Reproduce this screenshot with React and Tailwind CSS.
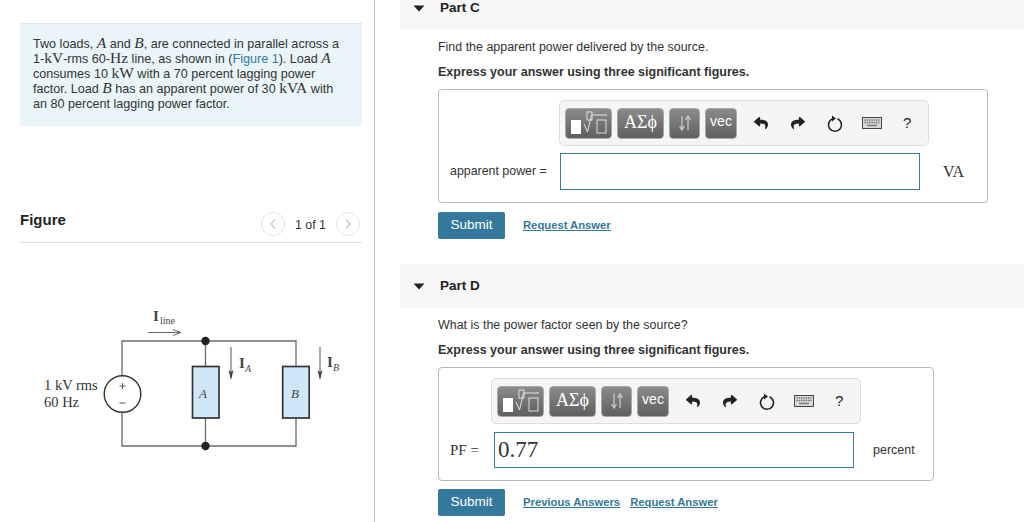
import React from "react";
import { FaReply, FaShare } from "react-icons/fa";

const sans = "font-['Liberation_Sans',Arial,sans-serif]";
const serif = "font-['Liberation_Serif','Times_New_Roman',serif]";

function M({ children, it }) {
  return <span className={`${serif} text-[15.500px] leading-none ${it ? "italic" : ""}`}>{children}</span>;
}

function Line({ children, className = "" }) {
  return <div className={`whitespace-nowrap h-[15px] ${className}`}>{children}</div>;
}

function Pager() {
  const Circle = ({ d }) => (
    <span className="w-[24px] h-[24px] rounded-full border border-[#e3e3e3] flex items-center justify-center">
      <svg width="8" height="12" viewBox="0 0 8 12" fill="none" stroke="#b5b5b5" strokeWidth="1.1">
        <path d={d} />
      </svg>
    </span>
  );
  return (
    <div className="flex items-center gap-[10px] text-[12.4px] text-[#333] mr-[2px] mt-[5px]">
      <Circle d="M6 1.5 L2 6 L6 10.5" />
      <span className="mt-[2px]">1 of 1</span>
      <Circle d="M2 1.5 L6 6 L2 10.5" />
    </div>
  );
}

function Circuit() {
  const w = "#6b6b6b";
  return (
    <svg width="330" height="160" viewBox="40 300 330 160" className="block" fill="none">
      <path d="M122 375.5V341H296V366M296 418V446H122V412.5" stroke={w} strokeWidth="1.3" />
      <path d="M205.5 341V366M205.5 418V446" stroke={w} strokeWidth="1.3" />
      <circle cx="122.5" cy="394" r="18.3" stroke="#333" strokeWidth="1.4" fill="#fff" />
      <path d="M119.5 386h6M122.5 383v6M119.5 403h6" stroke="#555" strokeWidth="1" />
      <rect x="192.5" y="366.5" width="26.5" height="51.5" fill="#cfe7f7" stroke="#333" strokeWidth="1.7" />
      <rect x="282.7" y="366.5" width="26.5" height="51.5" fill="#cfe7f7" stroke="#333" strokeWidth="1.7" />
      <circle cx="205.5" cy="341" r="4.2" fill="#222" />
      <circle cx="205.5" cy="446" r="4.2" fill="#222" />
      <path d="M148 332.5H180M173 329.5L181 332.5L173 335.5" stroke="#555" strokeWidth="0.9" />
      <path d="M231 347V378" stroke="#555" strokeWidth="1" />
      <path d="M228.500 370L231 380L233.500 370L231 372Z" fill="#444" />
      <path d="M320 347V378" stroke="#555" strokeWidth="1" />
      <path d="M317.500 370L320 380L322.500 370L320 372Z" fill="#444" />
      <g fontFamily="'Liberation Serif',serif" fill="#444">
        <text x="153" y="321" fontSize="15" fontWeight="700">I</text>
        <text x="160" y="324" fontSize="10">line</text>
        <text x="239" y="368" fontSize="15" fontWeight="700">I</text>
        <text x="245" y="372" fontSize="10" fontStyle="italic">A</text>
        <text x="327" y="367" fontSize="15" fontWeight="700">I</text>
        <text x="333" y="371" fontSize="10" fontStyle="italic">B</text>
        <text x="199" y="398" fontSize="13" fontStyle="italic">A</text>
        <text x="291" y="398" fontSize="13" fontStyle="italic">B</text>
        <text x="44" y="390" fontSize="14.5" fill="#333">1 kV rms</text>
        <text x="44" y="407" fontSize="14.5" fill="#333">60 Hz</text>
      </g>
    </svg>
  );
}

function ToolBtn({ className = "", children }) {
  return (
    <div className={`h-[31px] rounded-[4px] bg-gradient-to-b from-[#8b8b8b] to-[#5f5f5f] border border-[#a8a8a8] text-white flex items-center justify-center ${className}`}>
      {children}
    </div>
  );
}

function Toolbar() {
  return (
    <div className="w-[370px] h-[46px] rounded-[5px] border border-[#dcdcdc] bg-[#f5f5f5] flex items-center pl-[5px]">
      <ToolBtn className="w-[47px]">
        <svg width="38" height="24" viewBox="0 0 38 24" fill="none">
          <rect x="1" y="9" width="10" height="14" fill="#fff" />
          <rect x="17" y="1" width="5" height="8" stroke="#e8e8e8" strokeWidth="0.9" />
          <path d="M14 13L17.500 21L21.500 4H37" stroke="#eee" strokeWidth="0.9" />
          <rect x="27" y="9" width="9" height="13" stroke="#e8e8e8" strokeWidth="0.9" />
        </svg>
      </ToolBtn>
      <ToolBtn className={`w-[47px] ml-[5px] ${serif} text-[18px] pb-[1px]`}>ΑΣϕ</ToolBtn>
      <ToolBtn className="w-[31px] ml-[5px]">
        <svg width="14" height="16" viewBox="0 0 14 16" fill="none" stroke="#c9c9c9" strokeWidth="1.3">
          <path d="M4 1V14M1.500 11L4 15L6.500 11" />
          <path d="M10 15V2M7.500 5L10 1L12.500 5" />
        </svg>
      </ToolBtn>
      <ToolBtn className={`w-[32px] ml-[5px] text-[14px] ${sans} pb-[3px]`}>vec</ToolBtn>
      <div className="flex items-center text-[#222] ml-[17px]">
        <FaReply size={14} />
        <FaShare size={14} className="ml-[23px]" />
        <svg width="16" height="17" viewBox="0 0 16 17" fill="none" className="ml-[22px]">
          <path d="M5.500 3.700A6.500 6.500 0 1 0 10.500 3.700" stroke="#222" strokeWidth="1.6" />
          <path d="M5 0.500L9 3.500L5 6.500Z" fill="#222" />
        </svg>
        <svg width="20" height="12" viewBox="0 0 20 12" className="ml-[19px]">
          <rect x="0.500" y="0.500" width="19" height="11" fill="#d9d9d9" stroke="#444" />
          <path d="M2.500 3h15M2.500 5.500h15" stroke="#777" strokeDasharray="1.500 0.800" strokeWidth="1.400" />
          <path d="M5 8.500h10" stroke="#777" strokeWidth="1.400" />
        </svg>
        <span className={`${sans} text-[15px] ml-[21px]`}>?</span>
      </div>
    </div>
  );
}

function PartHeader({ title, className }) {
  return (
    <div className={`bg-[#f7f7f7] flex items-center ${className}`}>
      <svg width="12" height="7" viewBox="0 0 12 7" className="ml-[13px] mr-[15px]">
        <path d="M0.500 0.500H11.500L6 6.500Z" fill="#222" />
      </svg>
      <span className="text-[13.500px] font-bold text-[#222]">{title}</span>
    </div>
  );
}

function Submit() {
  return (
    <div className="w-[67px] h-[27px] rounded-[2px] bg-[#34799b] text-white text-[13.500px] flex items-center justify-center">
      Submit
    </div>
  );
}

function Link({ children }) {
  return <span className="text-[11.250px] font-bold underline text-[#34799b]">{children}</span>;
}

export default function App() {
  return (
    <div className={`w-[1024px] h-[522px] overflow-hidden bg-white flex ${sans} text-[#333]`}>
      <aside className="w-[375px] h-full border-r border-[#a9c4d6] pl-[20px] pr-[12px] pt-[23px] shrink-0">
        <div className="h-[103px] bg-[#e9f5f8] border-t border-[#dfe6e8] pl-[13px] pr-[12px] pt-[11px] text-[12.600px] leading-[15px] text-[#333]">
          <Line>Two loads, <M it>A</M> and <M it>B</M>, are connected in parallel across a</Line>
          <Line>1-<M>kV</M>-rms 60-<M>Hz</M> line, as shown in (<span className="text-[#2f7a9e]">Figure 1</span>). Load <M it>A</M></Line>
          <Line>consumes 10 <M>kW</M> with a 70 percent lagging power</Line>
          <Line>factor. Load <M it>B</M> has an apparent power of 30 <M>kVA</M> with</Line>
          <Line className="mt-[2px]">an 80 percent lagging power factor.</Line>
        </div>
        <div className="mt-[81px] h-[36px] border-b border-[#dcdcdc] flex items-start justify-between">
          <span className="text-[15px] font-bold text-[#222] mt-[2px]">Figure</span>
          <Pager />
        </div>
        <div className="mt-[57px] ml-[20px]">
          <Circuit />
        </div>
      </aside>

      <main className="flex-1 pl-[25px] min-w-0">
        <PartHeader title="Part C" className="h-[29px] pb-[13px]" />
        <section className="pl-[38px] pr-[36px]">
          <p className="mt-[11px] text-[12.450px] leading-[14px]">Find the apparent power delivered by the source.</p>
          <p className="mt-[11px] text-[12.500px] leading-[14px] font-bold text-[#333]">Express your answer using three significant figures.</p>
          <div className="mt-[10px] h-[114px] rounded-[4px] border border-[#b8b8b8] pl-[120px] pt-[10px]">
            <Toolbar />
            <div className="flex items-center mt-[7px] ml-[-109px]">
              <span className="text-[12.400px] w-[110px] shrink-0">apparent power =</span>
              <div className="w-[360px] h-[37px] border border-[#34799b] shrink-0" />
              <span className={`${serif} text-[16px] ml-[23px]`}>VA</span>
            </div>
          </div>
          <div className="flex items-center mt-[9px] gap-[18px]">
            <Submit />
            <Link>Request Answer</Link>
          </div>
        </section>

        <PartHeader title="Part D" className="h-[44px] mt-[25px]" />
        <section className="pl-[38px] pr-[90px]">
          <p className="mt-[10px] text-[12.450px] leading-[14px]">What is the power factor seen by the source?</p>
          <p className="mt-[11px] text-[12.500px] leading-[14px] font-bold text-[#333]">Express your answer using three significant figures.</p>
          <div className="mt-[10px] h-[114px] rounded-[4px] border border-[#b8b8b8] pl-[52px] pt-[10px]">
            <Toolbar />
            <div className="flex items-center mt-[8px] ml-[-41px]">
              <span className={`${serif} text-[15px] w-[44px] shrink-0`}>PF =</span>
              <div className={`w-[360px] h-[36px] border border-[#34799b] shrink-0 ${serif} text-[23px] text-[#333] pl-[3px] flex items-center`}>0.77</div>
              <span className="text-[12.500px] ml-[19px]">percent</span>
            </div>
          </div>
          <div className="flex items-center mt-[8px] gap-[18px]">
            <Submit />
            <div className="flex gap-[10px]">
              <Link>Previous Answers</Link>
              <Link>Request Answer</Link>
            </div>
          </div>
        </section>
      </main>
    </div>
  );
}
